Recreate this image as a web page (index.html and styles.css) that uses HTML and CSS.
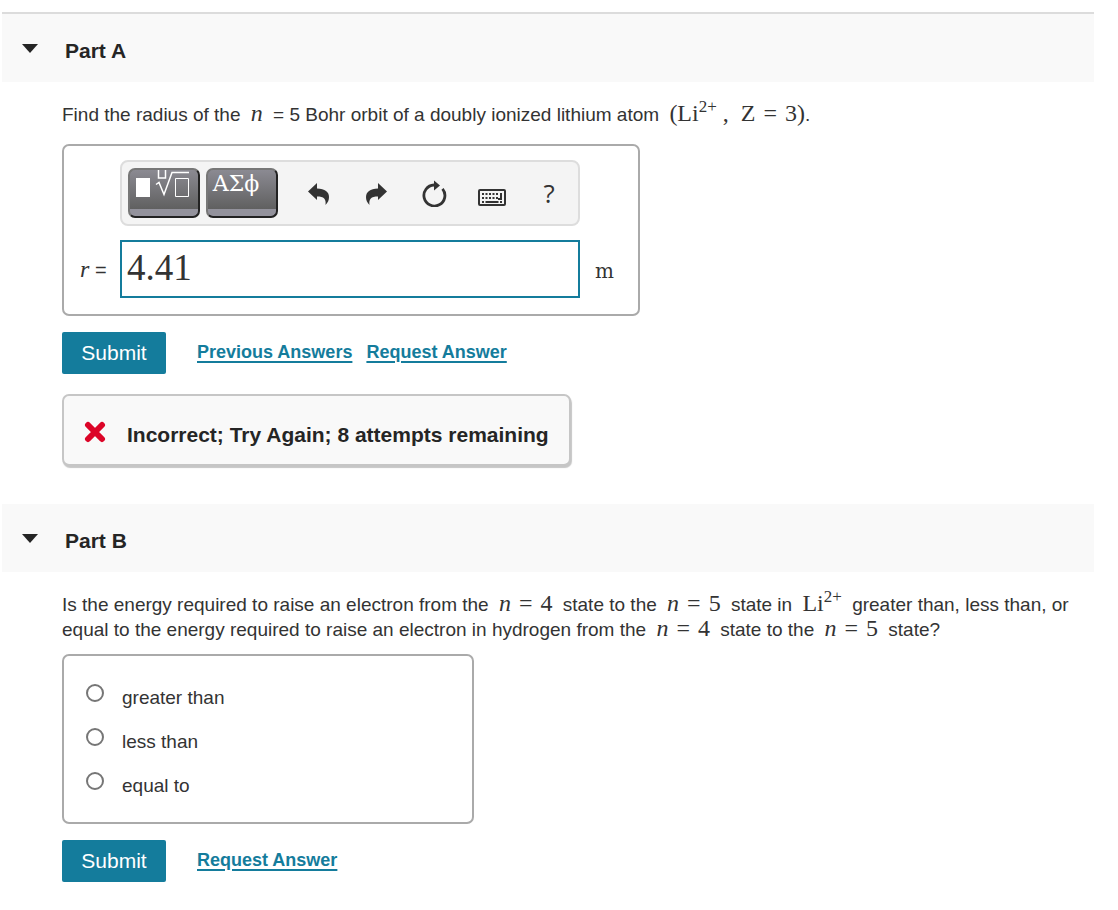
FILE: index.html
```html
<!DOCTYPE html>
<html lang="en">
<head>
    <meta charset="UTF-8">
    <title>Bohr orbit problem</title>
    <link rel="stylesheet" href="styles.css">
</head>
<body>
<section class="part part-first">
    <h2 class="part-header">
        <svg class="caret" width="16" height="10" viewBox="0 0 16 10"><path d="M0 0h16L8 9z" fill="#252525"/></svg>
        Part A
    </h2>
    <div class="part-body">
        <p class="prompt">Find the radius of the <i class="math">n</i> = 5 Bohr orbit of a doubly ionized lithium atom <span class="math math-end">(Li<sup>2+</sup><span class="comma">,</span>Z<span class="eq">=</span>3)</span>.</p>
        <div class="answer">
            <div class="toolbar">
                <button type="button" class="template" aria-label="Templates">
                    <svg width="68" height="38" viewBox="0 0 68 38" fill="none" stroke="#fff">
                        <path d="M6 8h14v19H6z" fill="#fff" stroke="none"/>
                        <path d="M28.500 0v8h7V0" stroke-width="1.5"/>
                        <path d="M26 14.500l3-2 5 12 8-22h17" stroke-width="1.5"/>
                        <path d="M45.500 8.500h13v18h-13z"/>
                    </svg>
                </button>
                <button type="button" class="template greek" aria-label="Symbols">ΑΣϕ</button>
                <button type="button" class="tool" aria-label="undo">
                    <svg width="28" height="28" viewBox="0 0 28 28"><path d="M3 12.500L12 4v5.500c8 .3 12 3.500 12 8.500 0 3-1 5.500-3.500 8 .8-6-1.500-8.500-8.500-8.500V21z" fill="#333"/></svg>
                </button>
                <button type="button" class="tool" aria-label="redo">
                    <svg width="28" height="28" viewBox="0 0 28 28"><path d="M25 12.500L16 4v5.500c-8 .3-12 3.500-12 8.500 0 3 1 5.500 3.500 8-.8-6 1.500-8.500 8.500-8.500V21z" fill="#333"/></svg>
                </button>
                <button type="button" class="tool" aria-label="reset">
                    <svg width="28" height="28" viewBox="0 0 28 28"><path d="M14 6A10.500 10.500 0 1 0 22.500 9.800" fill="none" stroke="#333" stroke-width="2.800"/><path d="M14 1.500l6 5-6 5z" fill="#333"/></svg>
                </button>
                <button type="button" class="tool" aria-label="keyboard shortcuts">
                    <svg width="28" height="28" viewBox="0 0 28 28" fill="none" stroke="#333">
                        <rect x="1" y="11" width="26" height="15" rx="1" stroke-width="2"/>
                        <path d="M4 15h16M4 19h16M4 23h2M22 23h2" stroke-width="2" stroke-dasharray="2 1.500"/>
                        <path d="M7.500 23h13" stroke-width="2"/>
                        <path d="M23 14v6h-3" stroke-width="2"/>
                    </svg>
                </button>
                <button type="button" class="tool help" aria-label="help">?</button>
            </div>
            <label class="variable" for="radius"><i>r</i> =</label>
            <input class="value" id="radius" type="text" value="4.41">
            <span class="unit">m</span>
        </div>
        <div class="actions">
            <button type="submit" class="submit">Submit</button>
            <a href="#">Previous Answers</a>
            <a href="#">Request Answer</a>
        </div>
        <div class="feedback">
            <svg width="22" height="22" viewBox="0 0 22 22"><path d="M4 4l14 14M18 4L4 18" stroke="#dc0528" stroke-width="6" stroke-linecap="round"/></svg>
            Incorrect; Try Again; 8 attempts remaining
        </div>
    </div>
</section>
<section class="part">
    <h2 class="part-header">
        <svg class="caret" width="16" height="10" viewBox="0 0 16 10"><path d="M0 0h16L8 9z" fill="#252525"/></svg>
        Part B
    </h2>
    <div class="part-body">
        <p class="prompt">Is the energy required to raise an electron from the <span class="math"><i>n</i><span class="eq">=</span>4</span> state to the <span class="math"><i>n</i><span class="eq">=</span>5</span> state in <span class="math">Li<sup>2+</sup></span> greater than, less than, or equal to the energy required to raise an electron in hydrogen from the <span class="math"><i>n</i><span class="eq">=</span>4</span> state to the <span class="math"><i>n</i><span class="eq">=</span>5</span> state?</p>
        <div class="choices">
            <div class="choice"><input type="radio" name="energy" id="greater"><label for="greater">greater than</label></div>
            <div class="choice"><input type="radio" name="energy" id="less"><label for="less">less than</label></div>
            <div class="choice"><input type="radio" name="energy" id="equal"><label for="equal">equal to</label></div>
        </div>
        <div class="actions">
            <button type="submit" class="submit">Submit</button>
            <a href="#">Request Answer</a>
        </div>
    </div>
</section>
</body>
</html>
```
FILE: styles.css
```css
* {
    box-sizing: border-box;
}

body {
    margin: 12px 24px 24px 2px;
    background: #fff;
    color: #333;
    font-family: "Liberation Sans", Arial, sans-serif;
    font-size: 19px;
    line-height: 25px;
}

button,
input {
    margin: 0;
    font-family: inherit;
    color: inherit;
}

.part {
    margin-bottom: 38px;
}

.part-first {
    border-top: 2px solid #dcdcdc;
}

.part-header {
    display: flex;
    align-items: center;
    gap: 27px;
    height: 68px;
    margin: 0;
    padding: 4px 20px 0;
    background: #f9f9f9;
    color: #252525;
    font-size: 21px;
}

.caret {
    margin-bottom: 2px;
}

.part-body {
    padding: 20px 0 0 60px;
}

.prompt {
    margin: 0 0 12px;
}

.part-first .prompt {
    margin-bottom: 17px;
}

.math {
    margin: 0 5px;
    font-family: "Liberation Serif", "Times New Roman", serif;
    font-size: 24px;
    line-height: 20px;
    white-space: nowrap;
}

.math-end {
    margin-right: 0;
}

.math sup {
    font-size: 17px;
    line-height: 0;
}

.comma {
    margin: 0 12px 0 6px;
}

.eq {
    margin: 0 8px;
}

.answer {
    display: grid;
    grid-template-columns: 42px 1fr 58px;
    align-items: center;
    row-gap: 14px;
    max-width: 578px;
    padding: 14px 0 16px 14px;
    border: 2px solid #aaa;
    border-radius: 7px;
}

.toolbar {
    grid-column: 2;
    display: flex;
    align-items: center;
    height: 66px;
    padding-left: 6px;
    border: 2px solid #ddd;
    border-radius: 8px;
    background: #f4f4f4;
}

.template {
    width: 72px;
    height: 50px;
    margin-right: 6px;
    padding: 0;
    border: 2px solid #222;
    border-top-color: #777;
    border-left-color: #777;
    border-radius: 7px;
    background: linear-gradient(#8b8a92, #606060 39px, #93929c 39px);
    overflow: hidden;
}

.template svg {
    display: block;
    margin-bottom: 8px;
}

.greek {
    margin-right: 12px;
    padding: 0 14px 18px 2px;
    color: #fff;
    font-family: "DejaVu Serif", serif;
    font-size: 22px;
    line-height: 26px;
}

.tool {
    display: flex;
    align-items: center;
    justify-content: center;
    flex: 1;
    height: 50px;
    padding: 0;
    border: 0;
    background: none;
}

.help {
    font-family: "Open Sans", sans-serif;
    font-size: 26px;
}

.variable {
    grid-column: 1;
    padding: 2px 0 0 2px;
    font-size: 20px;
}

.variable i {
    font-family: "Liberation Serif", "Times New Roman", serif;
    font-size: 24px;
}

.value {
    grid-column: 2;
    width: 100%;
    height: 58px;
    padding: 0 5px 4px;
    border: 2px solid #147c9c;
    border-radius: 0;
    background: #fff;
    font-family: "Liberation Serif", "Times New Roman", serif;
    font-size: 37px;
}

.unit {
    padding: 4px 0 0 15px;
    font-family: "DejaVu Serif", serif;
    font-size: 20px;
}

.actions {
    display: flex;
    align-items: center;
    margin-top: 16px;
}

.submit {
    width: 104px;
    height: 42px;
    margin-right: 31px;
    padding: 0;
    border: 0;
    border-radius: 2px;
    background: #147c9c;
    color: #fff;
    font-size: 21px;
}

.actions a {
    margin-right: 14px;
    padding-bottom: 2px;
    color: #147c9c;
    font-size: 18px;
    font-weight: bold;
    text-decoration-thickness: 2px;
    text-underline-offset: 3px;
}

.feedback {
    display: flex;
    align-items: center;
    gap: 21px;
    width: fit-content;
    min-height: 72px;
    margin-top: 20px;
    padding: 8px 20px 0;
    border: 2px solid #c6c6c6;
    border-radius: 7px;
    background: #f9f9f9;
    box-shadow: 1px 2px 1px #c6c6c6;
    color: #252525;
    font-size: 21px;
    font-weight: bold;
}

.feedback svg {
    margin-bottom: 4px;
}

.choices {
    max-width: 412px;
    padding: 19px 22px 15px;
    border: 2px solid #aaa;
    border-radius: 7px;
}

.choice {
    display: flex;
    gap: 18px;
    height: 44px;
}

.choice input {
    width: 18px;
    height: 18px;
    margin-top: 9px;
    appearance: none;
    border: 2px solid #767676;
    border-radius: 50%;
    background: #fff;
}

.choice input:checked {
    background: #147c9c;
    box-shadow: inset 0 0 0 3px #fff;
}

.choice label {
    padding-top: 10px;
}
```
